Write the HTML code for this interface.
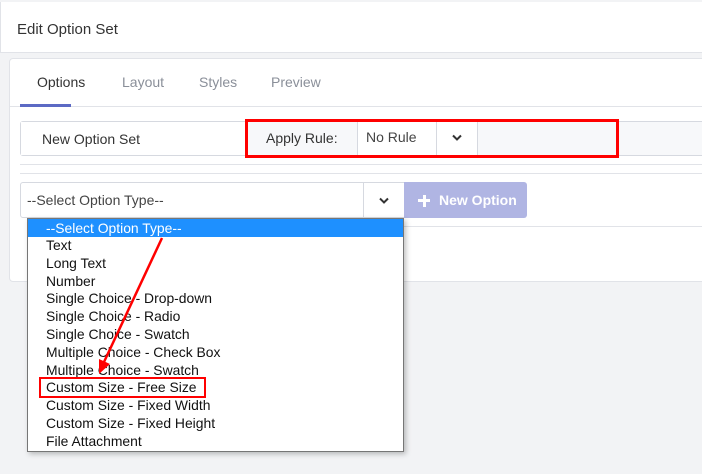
<!DOCTYPE html>
<html><head><style>
*{box-sizing:border-box;margin:0;padding:0}
body{width:702px;height:474px;background:#f2f3f5;font-family:"Liberation Sans",sans-serif;position:relative;overflow:hidden}
.a{position:absolute}
</style></head><body>
<div class="a" style="left:0;top:2px;width:702px;height:51px;background:#fff;border-bottom:1px solid #e1e3e8;border-left:1px solid #e1e3e8"></div>
<div class="a" style="left:17px;top:21px;font-size:15px;color:#333;">Edit Option Set</div>
<div class="a" style="left:9px;top:58px;width:700px;height:224px;background:#fff;border:1px solid #e1e3e8;border-radius:4px"></div>
<div class="a" style="left:37px;top:74px;font-size:14px;color:#333">Options</div>
<div class="a" style="left:122px;top:74px;font-size:14px;color:#8a8f99">Layout</div>
<div class="a" style="left:199px;top:74px;font-size:14px;color:#8a8f99">Styles</div>
<div class="a" style="left:271px;top:74px;font-size:14px;color:#8a8f99">Preview</div>
<div class="a" style="left:10px;top:106px;width:692px;height:1px;background:#e1e3e8"></div>
<div class="a" style="left:20px;top:104px;width:51px;height:3px;background:#5c6ac4"></div>
<div class="a" style="left:20px;top:121px;width:690px;height:35px;border:1px solid #d6d9e0;border-radius:3px;background:#f7f8fa"></div>
<div class="a" style="left:21px;top:122px;width:226px;height:33px;background:#fff"></div>
<div class="a" style="left:42px;top:131px;font-size:14px;color:#333">New Option Set</div>
<div class="a" style="left:266px;top:130px;font-size:14px;color:#333">Apply Rule:</div>
<div class="a" style="left:357px;top:122px;width:1px;height:33px;background:#d6d9e0"></div>
<div class="a" style="left:358px;top:122px;width:119px;height:33px;background:#fff"></div>
<div class="a" style="left:366px;top:129px;font-size:14px;color:#444">No Rule</div>
<div class="a" style="left:436px;top:122px;width:1px;height:33px;background:#d6d9e0"></div>
<div class="a" style="left:477px;top:122px;width:1px;height:33px;background:#d6d9e0"></div>
<svg class="a" style="left:452px;top:134px" width="10" height="7"><path d="M1 1.5L5 5.5L9 1.5" stroke="#333" stroke-width="2" fill="none"/></svg>
<div class="a" style="left:245px;top:119px;width:374px;height:39px;border:3px solid #f00"></div>
<div class="a" style="left:20px;top:164px;width:682px;height:1px;background:#e1e3e8"></div>
<div class="a" style="left:20px;top:173px;width:682px;height:1px;background:#e1e3e8"></div>
<div class="a" style="left:20px;top:182px;width:385px;height:36px;border:1px solid #d6d9e0;border-radius:3px 0 0 3px;background:#fff"></div>
<div class="a" style="left:27px;top:192px;font-size:14px;color:#444">--Select Option Type--</div>
<div class="a" style="left:363px;top:183px;width:1px;height:34px;background:#d6d9e0"></div>
<svg class="a" style="left:379px;top:197px" width="10" height="7"><path d="M1 1.5L5 5.5L9 1.5" stroke="#333" stroke-width="2" fill="none"/></svg>
<div class="a" style="left:404px;top:182px;width:123px;height:36px;background:#b0b5e3;border-radius:0 3px 3px 0;color:#fff;font-size:14px;font-weight:bold;line-height:36px;padding-left:35px">New Option</div>
<div class="a" style="left:418px;top:199px;width:12px;height:3px;background:#fff"></div>
<div class="a" style="left:422.5px;top:194.5px;width:3px;height:12px;background:#fff"></div>
<div class="a" style="left:404px;top:226px;width:298px;height:1px;background:#e1e3e8"></div>
<div class="a" style="left:27px;top:218px;width:377px;height:234px;background:#fff;border:1px solid #767676;box-shadow:2px 2px 5px rgba(0,0,0,.25);font-size:13.9px;color:#111;line-height:17.8px">
<div style="background:#1e90ff;color:#fff;padding-left:18px;height:18px;line-height:18px">--Select Option Type--</div>
<div style="padding-left:18px">Text<br>Long Text<br>Number<br>Single Choice - Drop-down<br>Single Choice - Radio<br>Single Choice - Swatch<br>Multiple Choice - Check Box<br>Multiple Choice - Swatch<br>Custom Size - Free Size<br>Custom Size - Fixed Width<br>Custom Size - Fixed Height<br>File Attachment</div>
</div>
<div class="a" style="left:39px;top:377px;width:167px;height:21px;border:2px solid #f00"></div>
<svg class="a" style="left:0;top:0" width="702" height="474"><line x1="162" y1="238" x2="104" y2="362" stroke="#f00" stroke-width="2.5"/><path d="M99 374L99 359L110 364Z" fill="#f00"/></svg>
</body></html>
